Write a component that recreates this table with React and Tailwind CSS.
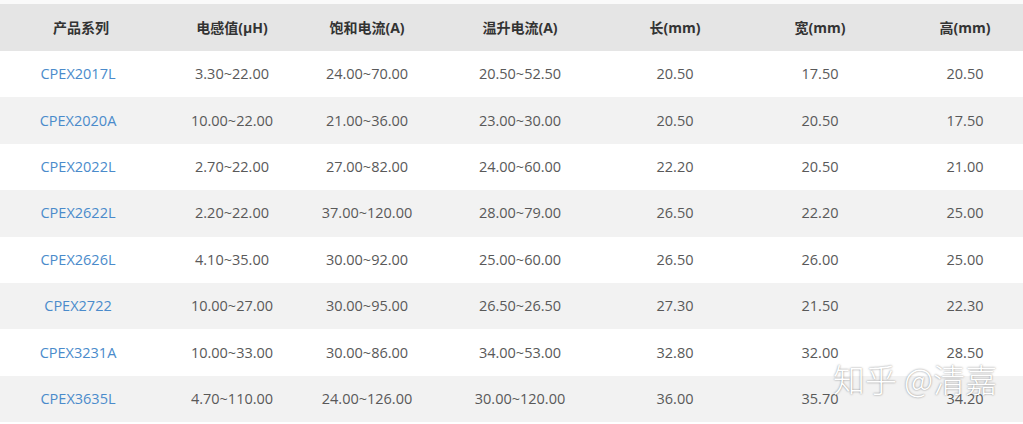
import React from "react";

const cols = [
  { key: "series", title: "产品系列", w: "w-[166px]" },
  { key: "l", title: "电感值(µH)", w: "w-[132px]" },
  { key: "sat", title: "饱和电流(A)", w: "w-[138px]" },
  { key: "rise", title: "温升电流(A)", w: "w-[168px]" },
  { key: "len", title: "长(mm)", w: "w-[142px]" },
  { key: "wid", title: "宽(mm)", w: "w-[148px]" },
  { key: "hei", title: "高(mm)", w: "w-[142px]" },
];

const rows = [
  ["CPEX2017L", "3.30~22.00", "24.00~70.00", "20.50~52.50", "20.50", "17.50", "20.50"],
  ["CPEX2020A", "10.00~22.00", "21.00~36.00", "23.00~30.00", "20.50", "20.50", "17.50"],
  ["CPEX2022L", "2.70~22.00", "27.00~82.00", "24.00~60.00", "22.20", "20.50", "21.00"],
  ["CPEX2622L", "2.20~22.00", "37.00~120.00", "28.00~79.00", "26.50", "22.20", "25.00"],
  ["CPEX2626L", "4.10~35.00", "30.00~92.00", "25.00~60.00", "26.50", "26.00", "25.00"],
  ["CPEX2722", "10.00~27.00", "30.00~95.00", "26.50~26.50", "27.30", "21.50", "22.30"],
  ["CPEX3231A", "10.00~33.00", "30.00~86.00", "34.00~53.00", "32.80", "32.00", "28.50"],
  ["CPEX3635L", "4.70~110.00", "24.00~126.00", "30.00~120.00", "36.00", "35.70", "34.20"],
];

const App = () => {
  return (
    <div className="relative w-[1023px] h-[424px] overflow-hidden bg-white font-['Open_Sans','Noto_Sans_CJK_SC',sans-serif]">
      <div className="h-[4px] bg-[#fafafa]" />

      {/* header */}
      <div className="flex h-[47px] items-center bg-[#e5e5e5] text-[14px] font-bold text-[#333]">
        {cols.map((c, j) => (
          <div key={c.key} className={`${c.w} shrink-0 text-center ${j === 0 ? "pr-[4px]" : ""}`}>
            {c.title}
          </div>
        ))}
      </div>

      {/* rows */}
      {rows.map((r, i) => (
        <div
          key={r[0]}
          className={`flex h-[46.4px] items-center text-[14.5px] ${
            i % 2 === 1 ? "bg-[#f2f2f2]" : "bg-white"
          }`}
        >
          {r.map((v, j) => (
            <div
              key={j}
              className={`${cols[j].w} shrink-0 text-center ${
                j === 0 ? "text-[#4a8bcb] pr-[10px]" : "text-[#595959]"
              }`}
            >
              {v}
            </div>
          ))}
        </div>
      ))}

      {/* watermark */}
      <div className="absolute left-[833px] top-[354px] text-[32px] font-light text-white [text-shadow:0_0_2px_rgba(0,0,0,0.5)] font-['Noto_Sans_CJK_SC',sans-serif]">
        知乎 @清嘉
      </div>
    </div>
  );
};

export default App;
